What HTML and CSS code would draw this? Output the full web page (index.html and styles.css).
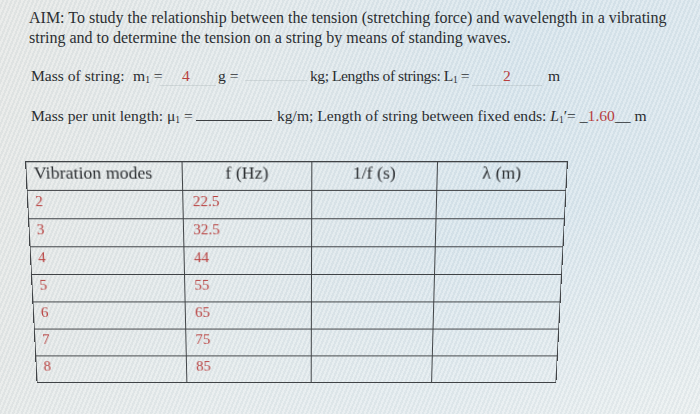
FILE: index.html
```html
<!DOCTYPE html>
<html>
<head>
<meta charset="utf-8">
<link rel="stylesheet" href="styles.css">
</head>
<body>
<div class="sheet">
  <p class="aim">AIM: To study the relationship between the tension (stretching force) and wavelength in a vibrating string and to determine the tension on a string by means of standing waves.</p>
  <div class="line line1">
    <span class="seg s-lbl">Mass of string:</span>
    <span class="seg s-eq">m<sub>1</sub> =</span>
    <span class="seg blank b1"><span class="red">4</span></span>
    <span class="seg s-g">g =</span>
    <span class="seg blank b2"></span>
    <span class="seg s-kg">kg; Lengths of strings: L<sub>1</sub> =</span>
    <span class="seg blank b3"><span class="red">2</span></span>
    <span class="seg">m</span>
  </div>
  <div class="line line2">
    <span class="seg s-lbl2">Mass per unit length: μ<sub>1</sub> =</span>
    <span class="seg blank b4"></span>
    <span class="seg">kg/m; Length of string between fixed ends: <i>L</i><sub class="it">1</sub>′= _<span class="red">1.60</span>__ m</span>
  </div>
  <table class="data">
    <colgroup>
      <col class="k1"><col class="k2"><col class="k3"><col class="k4">
    </colgroup>
    <thead>
      <tr><th>Vibration modes</th><th class="ctr">f (Hz)</th><th class="ctr">1/f (s)</th><th class="ctr">λ (m)</th></tr>
    </thead>
    <tbody>
      <tr><td>2</td><td>22.5</td><td></td><td></td></tr>
      <tr><td>3</td><td>32.5</td><td></td><td></td></tr>
      <tr><td>4</td><td>44</td><td></td><td></td></tr>
      <tr><td>5</td><td>55</td><td></td><td></td></tr>
      <tr><td>6</td><td>65</td><td></td><td></td></tr>
      <tr><td>7</td><td>75</td><td></td><td></td></tr>
      <tr><td>8</td><td>85</td><td></td><td></td></tr>
    </tbody>
  </table>
</div>
</body>
</html>
```
FILE: styles.css
```css
html, body {
  margin: 0;
  padding: 0;
}
body {
  width: 700px;
  height: 414px;
  overflow: hidden;
  font-family: "Liberation Serif", "Times New Roman", serif;
  color: #2c2f32;
  background:
    repeating-linear-gradient(112deg, rgba(255,255,255,0.22) 0 2px, rgba(170,185,195,0.10) 2px 4px),
    linear-gradient(165deg, rgba(255,255,255,0) 60%, rgba(240,242,240,0.7) 100%),
    linear-gradient(100deg, #e5e7e5 0%, #e1e8ea 35%, #d6e4ec 68%, #dbe7ed 100%);
}
.sheet {
  padding: 8px 0 0 29px;
}
.aim {
  margin: 0;
  width: 650px;
  font-size: 16px;
  line-height: 20px;
}
.line {
  display: flex;
  align-items: baseline;
  font-size: 15.6px;
  margin-left: 2px;
  white-space: nowrap;
  line-height: 18px;
}
.line1 {
  margin-top: 19px;
}
.line2 {
  margin-top: 20px;
}
.seg {
  display: inline-block;
}
sub {
  font-size: 9.5px;
  vertical-align: -2px;
  line-height: 0;
}
.red {
  color: #b8403f;
}
.s-lbl { width: 102px; }
.s-eq { width: 27px; }
.blank {
  border-bottom: 1px solid rgba(150,160,165,0.28);
}
.b1 { width: 56px; padding-left: 22px; box-sizing: border-box; }
.s-g { width: 25px; margin-left: 2px; }
.b2 { width: 62px; margin-left: 2px; margin-right: 3px; }
.s-kg { letter-spacing: -0.45px; }
.b3 { width: 70px; margin-left: 3px; margin-right: 6px; padding-left: 31px; box-sizing: border-box; }
.s-lbl2 { width: 165px; }
.b4 { width: 76px; border-bottom: 1px solid #3d4043; margin-right: 5px; height: 14px; }
.data {
  margin-top: 37px;
  margin-left: 2px;
  border-collapse: collapse;
  table-layout: fixed;
  width: 531px;
  transform: perspective(900px) rotateX(-10deg);
  transform-origin: 50% 50%;
}
.k1 { width: 28.9%; }
.k2 { width: 23.9%; }
.k3 { width: 23.2%; }
.k4 { width: 24%; }
.data th, .data td {
  border: 1.5px solid #404346;
  padding: 0 0 0 7px;
  text-align: left;
  vertical-align: top;
}
.data .ctr {
  text-align: center;
  padding-left: 0;
}
.data thead tr { height: 28px; }
.data tbody tr { height: 28px; }
.data th {
  font-weight: normal;
  font-size: 17.5px;
  line-height: 20px;
  padding-top: 0;
}
.data td {
  font-size: 15px;
  line-height: 20px;
  padding-top: 0;
}
.data td:nth-child(2) { padding-left: 9px; }
.data td:nth-child(1), .data td:nth-child(2) {
  color: #b8403f;
}
```
